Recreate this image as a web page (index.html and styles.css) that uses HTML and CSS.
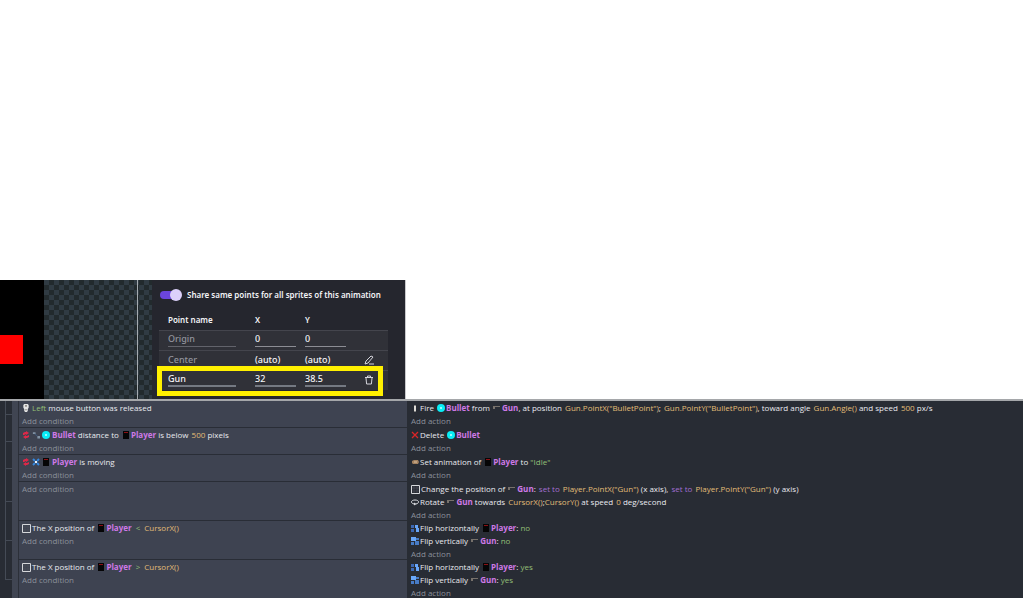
FILE: index.html
```html
<!DOCTYPE html>
<html lang="en">
<head>
<meta charset="utf-8">
<title>Points and events</title>
<link rel="stylesheet" href="styles.css">
</head>
<body>
<svg class="defs" aria-hidden="true">
  <symbol id="mouse" viewBox="0 0 8 9"><path d="M2 0h4l1 1v3L6 6v2L5 9H3L2 8V6L1 4V1z" fill="#e4e4e4"/><path d="M3 1h2v2H3zM3 6h2v1H3z" fill="#8c8984"/></symbol>
  <symbol id="invert" viewBox="0 0 8 8"><path d="M1 4V2l2-1h1V0l3 2-3 2V3L2 4zM7 4v2L5 7H4v1L1 6l3-2v1h1z" fill="#de2848"/></symbol>
  <symbol id="distance" viewBox="0 0 9 8"><path d="M1 1h3v2H1zM6 5h3v3H6z" fill="#8294a5"/><path d="M3 3l3 2" stroke="#405d82"/></symbol>
  <symbol id="bullet" viewBox="0 0 8 8"><circle cx="4" cy="4" r="4" fill="#09edf5"/><circle cx="4" cy="4" r="1" fill="#c4ffff"/></symbol>
  <symbol id="player" viewBox="0 0 6 8"><path d="M0 0h6v8H0z" fill="#050506"/><path d="M1 1h4v1H1z" fill="#8c1014"/></symbol>
  <symbol id="moving" viewBox="0 0 8 8"><path d="M1 1l2 2M7 1L5 3M1 7l2-2M7 7L5 5" stroke="#3688df" stroke-width="2"/><path d="M3 3h2v2H3z" fill="#eef6ff"/></symbol>
  <symbol id="position" viewBox="0 0 9 9"><path d="M.5.5h8v8h-8z" fill="none" stroke="#d5d7da"/><path d="M3 1v7M6 1v7M1 3h7M1 6h7" stroke="#4d525b" stroke-width=".6"/></symbol>
  <symbol id="fire" viewBox="0 0 8 8"><path d="M4 1l1 1v5L4 8 3 7V2z" fill="#dedbd5"/></symbol>
  <symbol id="gun" viewBox="0 0 8 8"><path d="M0 2h7v1H2v2H0z" fill="#77716b"/></symbol>
  <symbol id="delete" viewBox="0 0 8 8"><path d="M1 1l6 6M7 1L1 7" stroke="#db2527" stroke-width="1.3"/></symbol>
  <symbol id="anim" viewBox="0 0 8 8"><path d="M1 3l2-1h4l1 2-1 2H2L1 5z" fill="#a3815f"/><path d="M3 3h3v2H3z" fill="#bea080"/></symbol>
  <symbol id="rotate" viewBox="0 0 8 8"><path d="M3 6C-1 5 0 2 4 2s5 3 1 4H4" fill="none" stroke="#dadce0"/><path d="M3 4.500l2 1.500-2 1.500z" fill="#dadce0"/></symbol>
  <symbol id="fliph" viewBox="0 0 8 8"><path d="M0 1h3v3H0zM0 5h3v3H0z" fill="#3c68b4"/><path d="M4 1h3v3H4zM5 4h3v4H5z" fill="#68a6fa"/></symbol>
  <symbol id="flipv" viewBox="0 0 8 8"><path d="M0 0h5v4H0z" fill="#6aa8fa"/><path d="M5 1h3v2H5zM0 5h3v3H0zM4 4h4v4H4z" fill="#477bc5"/></symbol>
</svg>

<section class="points-editor">
  <div class="stage"><div class="sprite"></div></div>
  <div class="canvas"><div class="guide"></div></div>
  <div class="panel">
    <label class="share"><input type="checkbox" class="switch" checked>Share same points for all sprites of this animation</label>
    <table class="points">
      <colgroup><col class="col-name"><col class="col-x"><col class="col-y"><col></colgroup>
      <thead><tr><th>Point name</th><th>X</th><th>Y</th><th></th></tr></thead>
      <tbody>
        <tr><td><input class="field name dim" aria-label="Origin point name" value="Origin" readonly></td><td><input class="field" aria-label="Origin X" value="0"></td><td><input class="field" aria-label="Origin Y" value="0"></td><td></td></tr>
        <tr><td class="dim">Center</td><td>(auto)</td><td>(auto)</td><td><button class="tool" aria-label="Edit center"><svg viewBox="0 0 10 10"><path d="M1 9l1-3 5-5 2 1-5 6-3 1M5 9h5" fill="none" stroke="#d5d5dc"/></svg></button></td></tr>
        <tr class="selected"><td><input class="field name" aria-label="Gun point name" value="Gun"></td><td><input class="field" aria-label="Gun X" value="32"></td><td><input class="field" aria-label="Gun Y" value="38.5"></td><td><button class="tool" aria-label="Delete Gun"><svg viewBox="0 0 10 10"><path d="M1 2.5h8M3.5 2V1h3v1M2 3l.6 6h4.800L8 3" fill="none" stroke="#d5d5dc"/></svg></button></td></tr>
      </tbody>
    </table>
    <div class="highlight"></div>
  </div>
</section>

<main class="sheet">
  <section class="event">
    <div class="gutter"></div><div class="handle"></div>
    <div class="conditions"><p><svg><use href="#mouse"/></svg><i class="str">Left</i> mouse button was released</p><button class="add">Add condition</button></div>
    <div class="actions"><p><svg><use href="#fire"/></svg>Fire <b><svg><use href="#bullet"/></svg>Bullet</b> from <b><svg><use href="#gun"/></svg>Gun</b>, at position <i class="num">Gun.PointX("BulletPoint")</i>; <i class="num">Gun.PointY("BulletPoint")</i>, toward angle <i class="num">Gun.Angle()</i> and speed <i class="num">500</i> px/s</p><button class="add">Add action</button></div>
  </section>
  <section class="event">
    <div class="gutter"></div><div class="handle"></div>
    <div class="conditions"><p><svg><use href="#invert"/></svg><svg><use href="#distance"/></svg><b class="first"><svg><use href="#bullet"/></svg>Bullet</b> distance to <b><svg><use href="#player"/></svg>Player</b> is below <i class="num">500</i> pixels</p><button class="add">Add condition</button></div>
    <div class="actions"><p><svg><use href="#delete"/></svg>Delete <b><svg><use href="#bullet"/></svg>Bullet</b></p><button class="add">Add action</button></div>
  </section>
  <section class="event">
    <div class="gutter"></div><div class="handle"></div>
    <div class="conditions"><p><svg><use href="#invert"/></svg><svg><use href="#moving"/></svg><b class="first"><svg><use href="#player"/></svg>Player</b> is moving</p><button class="add">Add condition</button></div>
    <div class="actions"><p><svg><use href="#anim"/></svg>Set animation of <b><svg><use href="#player"/></svg>Player</b> to <i class="str">"Idle"</i></p><button class="add">Add action</button></div>
  </section>
  <section class="event">
    <div class="gutter"></div><div class="handle"></div>
    <div class="conditions"><button class="add">Add condition</button></div>
    <div class="actions"><p><svg class="grid"><use href="#position"/></svg>Change the position of <b><svg><use href="#gun"/></svg>Gun</b>: <i class="op">set to</i> <i class="num">Player.PointX("Gun")</i> (x axis), <i class="op">set to</i> <i class="num">Player.PointY("Gun")</i> (y axis)</p><p><svg><use href="#rotate"/></svg>Rotate <b><svg><use href="#gun"/></svg>Gun</b> towards <i class="num">CursorX()</i>;<i class="num tight">CursorY()</i> at speed <i class="num">0</i> deg/second</p><button class="add">Add action</button></div>
  </section>
  <section class="event">
    <div class="gutter"></div><div class="handle"></div>
    <div class="conditions"><p><svg class="grid"><use href="#position"/></svg>The X position of <b><svg><use href="#player"/></svg>Player</b> <i class="str compare">&lt;</i> <i class="num">CursorX()</i></p><button class="add">Add condition</button></div>
    <div class="actions"><p><svg><use href="#fliph"/></svg>Flip horizontally <b><svg><use href="#player"/></svg>Player</b>: <i class="str">no</i></p><p><svg><use href="#flipv"/></svg>Flip vertically <b><svg><use href="#gun"/></svg>Gun</b>: <i class="str">no</i></p><button class="add">Add action</button></div>
  </section>
  <section class="event last">
    <div class="gutter"></div><div class="handle"></div>
    <div class="conditions"><p><svg class="grid"><use href="#position"/></svg>The X position of <b><svg><use href="#player"/></svg>Player</b> <i class="str compare">&gt;</i> <i class="num">CursorX()</i></p><button class="add">Add condition</button></div>
    <div class="actions"><p><svg><use href="#fliph"/></svg>Flip horizontally <b><svg><use href="#player"/></svg>Player</b>: <i class="str">yes</i></p><p><svg><use href="#flipv"/></svg>Flip vertically <b><svg><use href="#gun"/></svg>Gun</b>: <i class="str">yes</i></p><button class="add">Add action</button></div>
  </section>
</main>
</body>
</html>
```
FILE: styles.css
```css
* { box-sizing: border-box; }
body { margin: 0; padding-top: 280px; background: #fff; font: 8px/13px "Open Sans", "Noto Sans", sans-serif; color: #e8eaef; }
button { border: 0; padding: 0; background: none; font: inherit; color: inherit; display: block; }
.defs { display: none; }

.points-editor { display: grid; grid-template-columns: 44px 108px 253px; width: max-content; height: 119px; background: #25262e; border-right: 1px solid #c9c9cc; }
.stage { background: #000; padding-top: 55px; }
.sprite { width: 23px; height: 29px; background: #f00; }
.canvas { background: conic-gradient(#222a2d 25%, #303b43 0 50%, #222a2d 0 75%, #303b43 0) 0 0 / 10px 10px; padding-left: 93px; }
.guide { width: 1px; height: 100%; background: #a5abb0; }
.panel { position: relative; padding: 8px 17px 0 7px; font-family: "Noto Sans", sans-serif; color: #f4f4f7; }
.share { display: flex; align-items: center; gap: 5px; height: 13px; font-weight: 600; white-space: nowrap; }
.switch { appearance: none; position: relative; width: 22px; height: 12px; margin: 0 0 0 1px; }
.switch::before { content: ""; position: absolute; left: 0; top: 2px; width: 18px; height: 8px; border-radius: 4px; background: #6b45dc; }
.switch::after { content: ""; position: absolute; right: 0; top: 0; width: 12px; height: 12px; border-radius: 6px; background: #dcd0fa; }
.points { width: 100%; margin-top: 9px; table-layout: fixed; border-collapse: collapse; }
.col-name { width: 96px; }
.col-x { width: 50px; }
.col-y { width: 59px; }
.points th, .points td { padding: 0; text-align: left; }
.points th { height: 20px; font-weight: 600; }
.points td { height: 20px; padding-bottom: 2px; background: #303138; border-top: 1px solid #44454d; font-size: 9px; font-weight: 500; }
.points tr > :first-child { padding-left: 9px; }
.field { display: block; width: 41px; height: 15px; padding: 0; border: 0; border-bottom: 1px solid #8c8d94; background: none; color: inherit; font: inherit; outline: 0; }
.field.name { width: 68px; border-color: #62636b; }
.points .dim { color: #92949d; }
.selected .field { border-bottom: 2px solid #747982; }
.tool { padding-top: 2px; }
.tool svg { display: block; width: 10px; height: 10px; }
.highlight { position: absolute; left: 5px; top: 86px; width: 226px; height: 30px; border: 5px solid #fff000; }

.sheet { border-top: 2px solid #a5a7aa; background: #282c34; }
.event { display: grid; grid-template-columns: 12px 6px 389px 1fr; min-height: 27px; }
.gutter { margin-left: 5px; border-left: 1px solid #454b56; background: linear-gradient(#454b56, #454b56) 0 50% / 100% 1px no-repeat; }
.last .gutter { border-left: 0; background: linear-gradient(#454b56, #454b56) 0 50% / 100% 1px no-repeat, linear-gradient(#454b56, #454b56) 0 0 / 1px 50% no-repeat; }
.handle { background: #404552; }
.conditions { padding-left: 3px; background: #3e4351; border-left: 1px solid #2c3039; border-bottom: 1px solid #292d36; }
.actions { padding: 0 0 1px 4px; }
.event p { margin: 0; height: 13px; white-space: nowrap; }
.event svg { display: inline-block; width: 8px; height: 8px; margin-right: 1px; vertical-align: -1px; }
.event svg.grid { width: 9px; height: 9px; vertical-align: -2px; }
.conditions p > svg:not(.grid), .event .first svg { margin-right: 2px; }
.event b { margin-left: 1px; font-weight: 700; color: #ce79e6; }
.event b.first { margin-left: 0; }
.event i { font-style: normal; }
.event .num { color: #e2bd78; margin-left: 1px; }
.event .tight { margin-left: 0; }
.str { color: #93bf76; }
.compare { margin: 0 1px 0 2px; }
.op { color: #a26fd1; margin-left: 1px; }
.add { height: 12px; line-height: 13px; color: #8b909a; }
```
